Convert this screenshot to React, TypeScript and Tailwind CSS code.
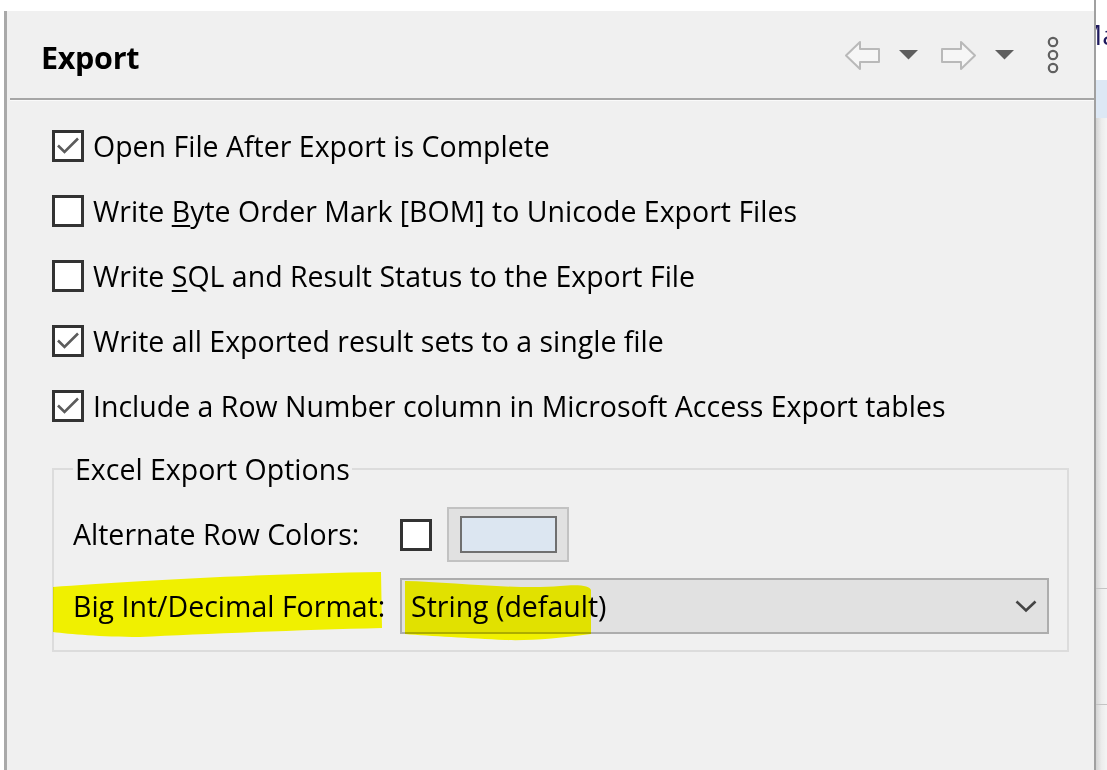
import React from 'react';

const font = { fontFamily: '"Open Sans", "Noto Sans", Arial, sans-serif' };

const Check = ({ checked }: { checked: boolean }) => (
  <div className="w-[32px] h-[32px] shrink-0 border-[3px] border-[#333333] bg-white flex items-center justify-center">
    {checked && (
      <svg width="26" height="26" viewBox="0 0 26 26">
        <path d="M3 12.5 L9.5 19 L23 5.5" fill="none" stroke="#5c5c5c" strokeWidth="2.6" />
      </svg>
    )}
  </div>
);

const Arrow = ({ flip }: { flip?: boolean }) => (
  <svg width="37" height="31" viewBox="0 0 37 31" className={flip ? '-scale-x-100' : ''}>
    <path
      d="M2 15.5 L16 2 L16 9 L35 9 L35 22 L16 22 L16 29 Z"
      fill="#f6f6f6"
      stroke="#b9b9b9"
      strokeWidth="2"
      strokeLinejoin="round"
    />
  </svg>
);

const Caret = () => (
  <svg width="19" height="10" viewBox="0 0 19 10">
    <path d="M0 0 L19 0 L9.5 9.5 Z" fill="#5e5e5e" />
  </svg>
);

const rows: { label: React.ReactNode; checked: boolean }[] = [
  { label: 'Open File After Export is Complete', checked: true },
  { label: <>Write <span className="underline underline-offset-[3px]">B</span>yte Order Mark [BOM] to Unicode Export Files</>, checked: false },
  { label: <>Write <span className="underline underline-offset-[3px]">S</span>QL and Result Status to the Export File</>, checked: false },
  { label: 'Write all Exported result sets to a single file', checked: true },
  { label: 'Include a Row Number column in Microsoft Access Export tables', checked: true },
];

export default function App() {
  return (
    <div className="w-[1107px] h-[770px] overflow-hidden bg-white flex text-black" style={font}>
      {/* main view */}
      <div className="w-[1094px] flex flex-col">
        <div className="h-[11px] bg-white" />
        <div className="flex-1 flex">
          <div className="w-[4px] bg-white" />
          <div className="flex-1 flex flex-col bg-[#f0f0f0] border-l-[3px] border-[#a9a9a9] relative">
            {/* header */}
            <div className="h-[87px] flex items-center pl-[34px] pr-[34px]">
              <span className="text-[30.5px] font-bold tracking-[-0.3px] mt-[6px]">Export</span>
              <div className="ml-auto flex items-center mt-[1px]">
                <Arrow />
                <div className="ml-[18px]"><Caret /></div>
                <div className="ml-[22px]"><Arrow flip /></div>
                <div className="ml-[18px]"><Caret /></div>
                <svg width="14" height="38" viewBox="0 0 14 38" className="ml-[32px]">
                  <circle cx="7" cy="6" r="4.2" fill="none" stroke="#606060" strokeWidth="2.2" />
                  <circle cx="7" cy="19" r="4.2" fill="none" stroke="#606060" strokeWidth="2.2" />
                  <circle cx="7" cy="32" r="4.2" fill="none" stroke="#606060" strokeWidth="2.2" />
                </svg>
              </div>
            </div>
            <div className="ml-[3px] h-[2px] bg-[#a6a6a6]" />
            <div className="ml-[3px] h-[1px] bg-[#fafafa]" />

            {/* options */}
            <div className="pl-[45px] pr-[25px] pt-[29px] flex flex-col gap-[33px] text-[28.5px] leading-[32px]">
              {rows.map((r, i) => (
                <div key={i} className="flex items-center gap-[9px]">
                  <Check checked={r.checked} />
                  <span className="whitespace-nowrap">{r.label}</span>
                </div>
              ))}
            </div>

            <fieldset className="mt-[29px] ml-[45px] w-[1017px] border-2 border-[#dcdcdc] pl-[19px] pr-[18px] pb-[16px] pt-[20px]">
              <legend className="px-[2px] text-[28.5px] leading-[36px]">Excel Export Options</legend>
              <div className="grid grid-cols-[327px_1fr] items-center gap-y-[16px] text-[28.5px]">
                <span className="whitespace-nowrap">Alternate Row Colors:</span>
                <div className="flex items-center gap-[15px]">
                  <Check checked={false} />
                  <div className="w-[122px] h-[55px] bg-[#e1e1e1] border-2 border-[#c2c2c2] flex items-center justify-center">
                    <div className="w-[97px] h-[37px] bg-[#dce6f1] border-2 border-[#6f6f6f]" />
                  </div>
                </div>
                <span className="whitespace-nowrap">Big Int/Decimal Format:</span>
                <div className="h-[56px] bg-[#e1e1e1] border-2 border-[#adadad] flex items-center pl-[9px] pr-[10px]">
                  <span>String (default)</span>
                  <svg width="22" height="13" viewBox="0 0 22 13" className="ml-auto">
                    <path d="M1.5 1.5 L11 10.5 L20.5 1.5" fill="none" stroke="#444444" strokeWidth="2.6" />
                  </svg>
                </div>
              </div>
            </fieldset>

            {/* highlighter marks */}
            <svg className="absolute left-0 top-0 pointer-events-none mix-blend-multiply" width="1090" height="760" viewBox="7 11 1090 760">
              <path
                d="M53 587 C120 582 250 574 381 572 L382 628 C300 630 200 634 140 637 C100 637 70 634 53 632 Z"
                fill="#ffff00"
              />
              <path
                d="M405 581 C450 582 520 590 560 586 C580 584 590 586 591 590 L591 634 C560 638 530 641 505 640 C470 638 430 636 405 634 Z"
                fill="#ffff00"
              />
            </svg>
          </div>
        </div>
      </div>

      {/* divider and neighbouring view */}
      <div className="w-[2px] bg-[#a0a0a0]" />
      <div className="flex-1 flex flex-col overflow-hidden">
        <div className="h-[80px] bg-white pt-[17px]">
          <span className="block -ml-[19px] text-[28px] leading-[34px] text-[#1f1a5e] whitespace-nowrap">Ma</span>
        </div>
        <div className="h-[38px] bg-[#dde8f5]" />
        <div className="flex-1 bg-gradient-to-r from-[#d4d4d4] via-[#ececec] to-[#f4f4f4] flex flex-col">
          <div className="h-[470px]" />
          <div className="h-[1px] bg-[#c4c4c4]" />
          <div className="h-[115px]" />
          <div className="h-[1px] bg-[#c4c4c4]" />
        </div>
      </div>
    </div>
  );
}
